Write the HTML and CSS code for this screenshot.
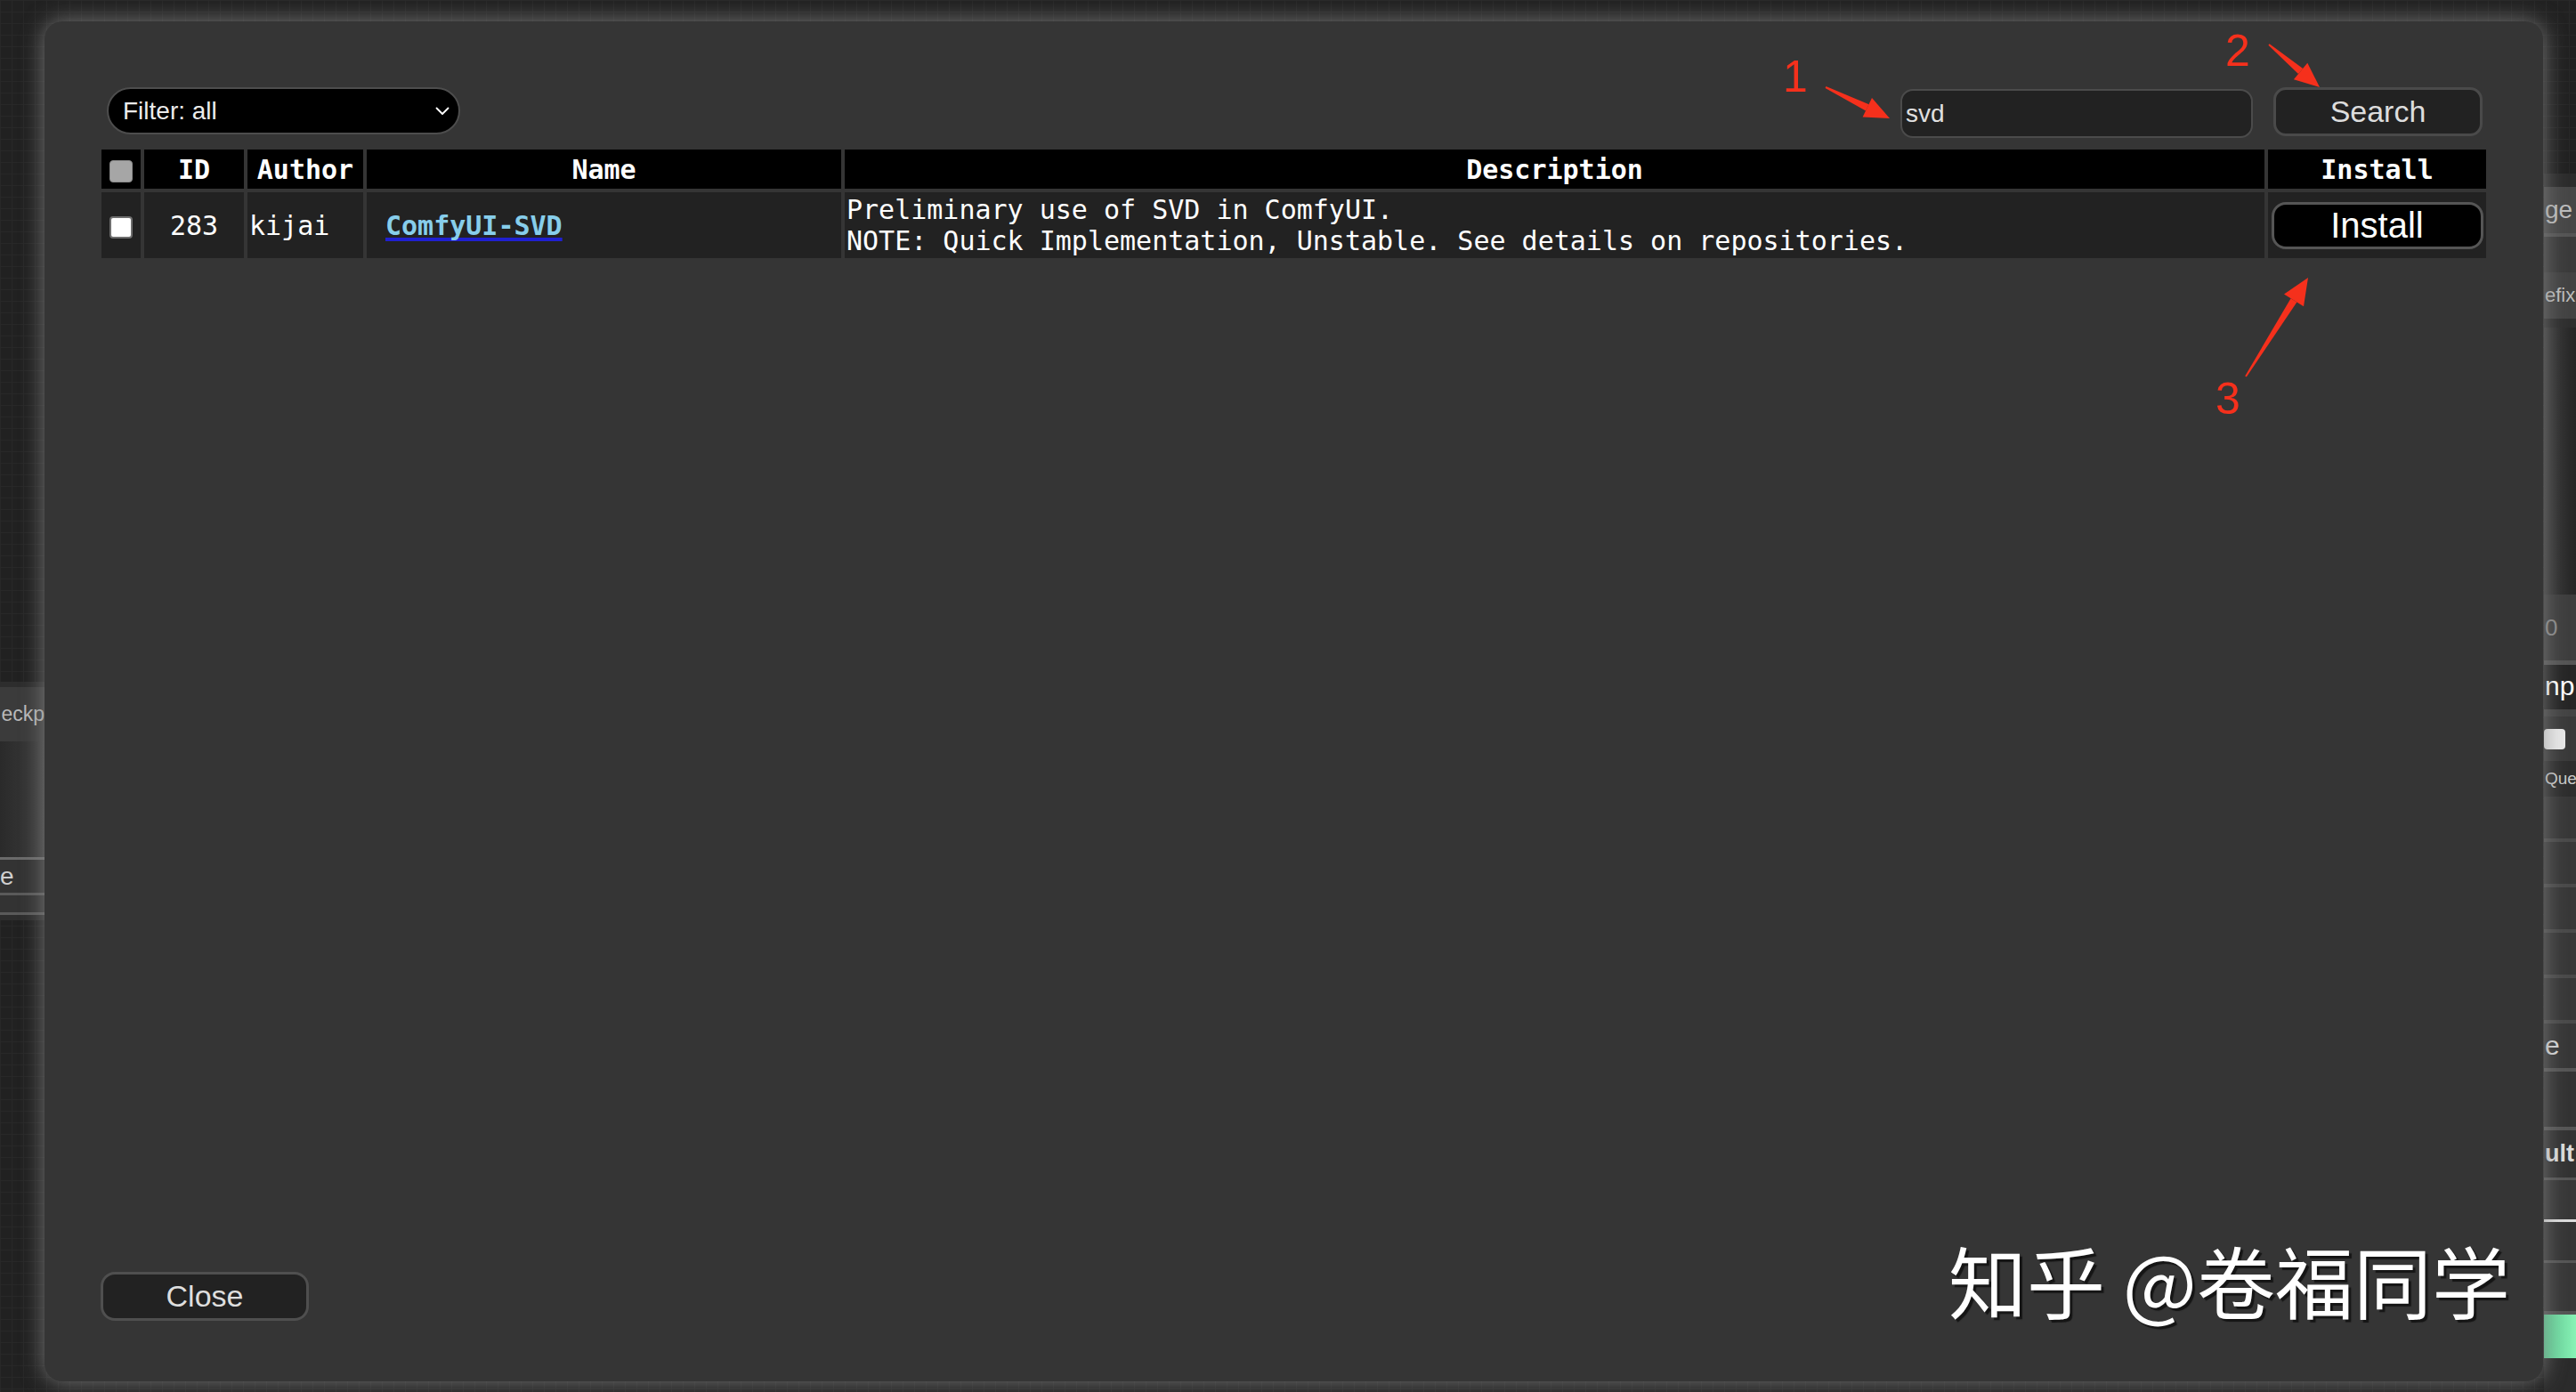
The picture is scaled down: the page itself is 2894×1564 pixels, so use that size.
FILE: index.html
```html
<!DOCTYPE html>
<html lang="zh-CN">
<head>
<meta charset="utf-8">
<title>ComfyUI Manager - Install Custom Nodes</title>
<link rel="stylesheet" href="styles.css">
</head>
<body>
<div class="node-left">
  <div class="nl-title">eckp</div>
  <div class="nl-body"></div>
  <div class="nl-row">e</div>
  <div class="nl-row nl-row-empty"></div>
</div>

<div class="side-menu">
  <div class="sm sm-top"></div>
  <div class="sm sm-label sm-ge">ge</div>
  <div class="sm sm-band"></div>
  <div class="sm sm-label sm-efix">efix</div>
  <div class="sm sm-sep"></div>
  <div class="sm sm-grid"></div>
  <div class="sm sm-label sm-zero">0</div>
  <div class="sm sm-line"></div>
  <div class="sm sm-label sm-np">np</div>
  <div class="sm sm-line2"></div>
  <div class="sm sm-cbrow"><span class="sm-check"></span></div>
  <div class="sm sm-label sm-que">Que</div>
  <div class="sm sm-band2"></div>
  <div class="sm sm-band2"></div>
  <div class="sm sm-band2"></div>
  <div class="sm sm-band2"></div>
  <div class="sm sm-band2"></div>
  <div class="sm sm-label sm-e">e</div>
  <div class="sm sm-band3"></div>
  <div class="sm sm-label sm-ult">ult</div>
  <div class="sm sm-band4"></div>
  <div class="sm sm-white"></div>
  <div class="sm sm-band5"></div>
  <div class="sm sm-band6"></div>
  <div class="sm sm-green"></div>
</div>

<div class="dialog">
  <div class="toolbar">
    <div class="filter">
      <span class="filter-text">Filter: all</span>
      <svg class="chevron" width="16" height="10" viewBox="0 0 16 10"><polyline points="1.5,1.5 8,8 14.5,1.5" fill="none" stroke="#ffffff" stroke-width="1.8" stroke-linecap="round" stroke-linejoin="round"/></svg>
    </div>
    <div class="search-group">
      <input class="search-input" type="text" value="svd">
      <button class="btn search-btn">Search</button>
    </div>
  </div>

  <table class="nodes">
    <colgroup>
      <col class="w-cb">
      <col class="w-id">
      <col class="w-author">
      <col class="w-name">
      <col class="w-desc">
      <col class="w-install">
    </colgroup>
    <thead>
      <tr>
        <th><input type="checkbox" class="cb cb-head" disabled></th>
        <th>ID</th>
        <th>Author</th>
        <th>Name</th>
        <th>Description</th>
        <th>Install</th>
      </tr>
    </thead>
    <tbody>
      <tr>
        <td class="center"><input type="checkbox" class="cb cb-row"></td>
        <td class="center">283</td>
        <td>kijai</td>
        <td class="name-cell"><a class="repo-link" href="#">ComfyUI-SVD</a></td>
        <td>Preliminary use of SVD in ComfyUI.<br>NOTE: Quick Implementation, Unstable. See details on repositories.</td>
        <td class="center"><button class="btn install-btn">Install</button></td>
      </tr>
    </tbody>
  </table>

  <button class="btn close-btn">Close</button>
</div>

<div class="watermark">知乎 @卷福同学</div>

<svg class="annotations" width="2894" height="1564" viewBox="0 0 2894 1564">
  <g fill="#f5301c">
    <polygon points="2050.6,98.9 2051.4,97.1 2099.6,117.2 2096.1,124.4"/>
    <polygon points="2123,133 2092.6,131.6 2103.0,110.0"/>
    <polygon points="2548.4,50.8 2549.6,49.2 2587.2,76.9 2582.0,83.1"/>
    <polygon points="2606,98 2576.9,89.2 2592.3,70.8"/>
    <polygon points="2523.8,423.5 2522.2,422.5 2573.6,335.3 2580.4,339.5"/>
    <polygon points="2593,312 2588.0,344.3 2566.0,330.5"/>
    <text class="anno-num" x="2017" y="103">1</text>
    <text class="anno-num" x="2514" y="74">2</text>
    <text class="anno-num" x="2503" y="465">3</text>
  </g>
</svg>
</body>
</html>
```

FILE: styles.css
```css
html, body {
  margin: 0;
  padding: 0;
}

body {
  width: 2894px;
  height: 1564px;
  overflow: hidden;
  position: relative;
  background-color: #212121;
  background-image:
    linear-gradient(#282828 1px, transparent 1px),
    linear-gradient(90deg, #282828 1px, transparent 1px);
  background-size: 13px 13px;
  font-family: "Liberation Sans", Arial, sans-serif;
}

/* ---------- background fragments of the canvas ---------- */
.node-left {
  position: absolute;
  left: 0;
  top: 766px;
  width: 50px;
  height: 268px;
  background: #2d2d2d;
  display: flex;
  flex-direction: column;
  overflow: hidden;
}

.nl-title {
  height: 61px;
  margin-top: 6px;
  background: #3b3b3b;
  color: #b9b9b9;
  font-size: 23px;
  line-height: 61px;
  text-align: right;
  white-space: nowrap;
}

.nl-body {
  height: 130px;
  background: linear-gradient(90deg, #2a2a2a, #3c3c3c);
  border-bottom: 3px solid #6a6a6a;
}

.nl-row {
  height: 37px;
  background: #333333;
  color: #cfcfcf;
  font-size: 28px;
  line-height: 37px;
  padding-left: 0;
  border-bottom: 3px solid #5a5a5a;
}

.nl-row-empty {
  height: 19px;
}

.side-menu {
  position: absolute;
  left: 2858px;
  top: 195px;
  width: 36px;
  height: 1369px;
  background: #2b2b2b;
  display: flex;
  flex-direction: column;
  overflow: hidden;
  font-family: "Liberation Sans", Arial, sans-serif;
}

.sm {
  flex: none;
  white-space: nowrap;
}

.sm-top { height: 15px; background: #2c2c2c; }

.sm-label {
  color: #bdbdbd;
  padding-left: 1px;
}

.sm-ge {
  height: 52px;
  line-height: 52px;
  font-size: 28px;
  background: #474747;
  border-bottom: 4px solid #555555;
}

.sm-band { height: 40px; background: #3b3b3b; }

.sm-efix {
  height: 52px;
  line-height: 52px;
  font-size: 22px;
  background: #434343;
}

.sm-sep { height: 10px; background: #2f2f2f; }

.sm-grid {
  height: 300px;
  background: linear-gradient(90deg, #3a3a3a, #262626);
}

.sm-zero {
  height: 74px;
  line-height: 74px;
  font-size: 26px;
  color: #8a8a8a;
  background: #3e3e3e;
}

.sm-line { height: 5px; background: #555555; }

.sm-np {
  height: 50px;
  line-height: 48px;
  font-size: 30px;
  color: #ffffff;
  background: #262626;
}

.sm-line2 { height: 8px; background: #444444; }

.sm-cbrow {
  height: 50px;
  background: #3a3a3a;
  display: flex;
  align-items: center;
}

.sm-check {
  width: 24px;
  height: 23px;
  border-radius: 4px;
  background: #e8e8e8;
}

.sm-que {
  height: 40px;
  line-height: 40px;
  font-size: 19px;
  color: #c9c9c9;
  background: #2e2e2e;
}

.sm-band2 {
  height: 47px;
  background: #383838;
  border-bottom: 4px solid #4a4a4a;
}

.sm-e {
  height: 50px;
  line-height: 50px;
  font-size: 30px;
  color: #d6d6d6;
  background: #373737;
}

.sm-band3 {
  height: 62px;
  background: #333333;
  border-top: 4px solid #555555;
  border-bottom: 4px solid #555555;
}

.sm-ult {
  height: 53px;
  line-height: 53px;
  font-size: 27px;
  font-weight: bold;
  color: #dcdcdc;
  background: #333333;
}

.sm-band4 {
  height: 44px;
  background: #383838;
  border-top: 3px solid #555555;
}

.sm-white { height: 3px; background: #dddddd; }

.sm-band5 {
  height: 43px;
  background: #363636;
  border-bottom: 3px solid #555555;
}

.sm-band6 {
  height: 54px;
  background: #383838;
  border-bottom: 4px solid #555555;
}

.sm-green {
  height: 49px;
  background: linear-gradient(90deg, #5ec992, #88f2b6);
}

/* ---------- dialog ---------- */
.dialog {
  position: absolute;
  left: 50px;
  top: 24px;
  width: 2807px;
  height: 1528px;
  box-sizing: border-box;
  background: #353535;
  border-radius: 20px;
  box-shadow: 0 0 26px rgba(140, 140, 140, 0.8);
  padding: 74px 0 68px 60px;
  display: flex;
  flex-direction: column;
  z-index: 5;
}

.toolbar {
  width: 2687px;
  height: 57px;
  display: flex;
  justify-content: space-between;
  align-items: flex-start;
  flex: none;
}

.filter {
  margin-left: 10px;
  width: 397px;
  height: 53px;
  box-sizing: border-box;
  background: #000000;
  border: 2px solid #4d4d4d;
  border-radius: 27px;
  padding: 0 10px 0 16px;
  display: flex;
  align-items: center;
  justify-content: space-between;
}

.filter-text {
  color: #ececec;
  font-size: 28px;
}

.chevron {
  display: block;
}

.search-group {
  display: flex;
  align-items: flex-start;
  gap: 23px;
  margin-right: 8px;
}

.search-input {
  margin: 2px 0 0 0;
  width: 396px;
  height: 55px;
  box-sizing: border-box;
  background: #222222;
  border: 2px solid #4b4b4b;
  border-radius: 14px;
  padding: 0 0 0 4px;
  color: #e0e0e0;
  font-family: "Liberation Sans", Arial, sans-serif;
  font-size: 28px;
  outline: none;
}

.btn {
  box-sizing: border-box;
  font-family: "Liberation Sans", Arial, sans-serif;
  padding: 0;
  margin: 0;
  cursor: pointer;
}

.search-btn {
  width: 235px;
  height: 55px;
  background: #222222;
  border: 3px solid #4a4a4a;
  border-radius: 14px;
  color: #dddddd;
  font-size: 34px;
}

/* ---------- table ---------- */
.nodes {
  margin-top: 9px;
  width: 2687px;
  table-layout: fixed;
  border-collapse: separate;
  border-spacing: 4px;
  flex: none;
}

.w-cb { width: 44px; }
.w-id { width: 112px; }
.w-author { width: 130px; }
.w-name { width: 533px; }
.w-desc { width: 1595px; }
.w-install { width: 245px; }

.nodes th {
  height: 44px;
  padding: 0 2px;
  background: #000000;
  color: #ffffff;
  font-family: "DejaVu Sans Mono", "Liberation Mono", monospace;
  font-weight: bold;
  font-size: 30px;
  line-height: 35px;
  text-align: center;
  vertical-align: middle;
  white-space: nowrap;
}

.nodes td {
  padding: 2px;
  background: #222222;
  color: #ffffff;
  font-family: "DejaVu Sans Mono", "Liberation Mono", monospace;
  font-size: 30px;
  line-height: 35px;
  text-align: left;
  vertical-align: middle;
  white-space: nowrap;
}

.nodes td.center {
  text-align: center;
}

.nodes td.name-cell {
  padding-left: 21px;
}

.repo-link {
  color: #87ceeb;
  font-weight: bold;
  text-decoration: underline;
  text-decoration-color: #2020d0;
  text-decoration-thickness: 4px;
  text-underline-offset: 3px;
  text-decoration-skip-ink: none;
}

.cb {
  appearance: none;
  -webkit-appearance: none;
  display: inline-block;
  width: 26px;
  height: 25px;
  margin: 0;
  box-sizing: border-box;
  border-radius: 4px;
  vertical-align: middle;
}

.cb-head {
  background: #a6a6a6;
  border: 1px solid #8c8c8c;
}

.cb-row {
  background: #ffffff;
  border: 2px solid #6e6e6e;
}

.install-btn {
  display: block;
  margin: 0 auto;
  width: 238px;
  height: 53px;
  background: #000000;
  border: 3px solid #555555;
  border-radius: 16px;
  color: #ffffff;
  font-size: 40px;
  line-height: 45px;
}

.close-btn {
  margin-top: auto;
  margin-left: 3px;
  width: 234px;
  height: 55px;
  flex: none;
  background: #222222;
  border: 3px solid #4f4f4f;
  border-radius: 16px;
  color: #dedede;
  font-size: 34px;
}

/* ---------- overlays ---------- */
.watermark {
  position: absolute;
  left: 2189px;
  top: 1393px;
  z-index: 10;
  font-family: "Noto Sans CJK SC", "Noto Sans", sans-serif;
  font-weight: 400;
  font-size: 88px;
  line-height: 1;
  color: #ffffff;
  text-shadow: 3px 3px 1px #151515;
  white-space: nowrap;
}

.annotations {
  position: absolute;
  left: 0;
  top: 0;
  z-index: 20;
  pointer-events: none;
}

.anno-num {
  font-family: "Liberation Sans", Arial, sans-serif;
  font-size: 50px;
  text-anchor: middle;
}
```
